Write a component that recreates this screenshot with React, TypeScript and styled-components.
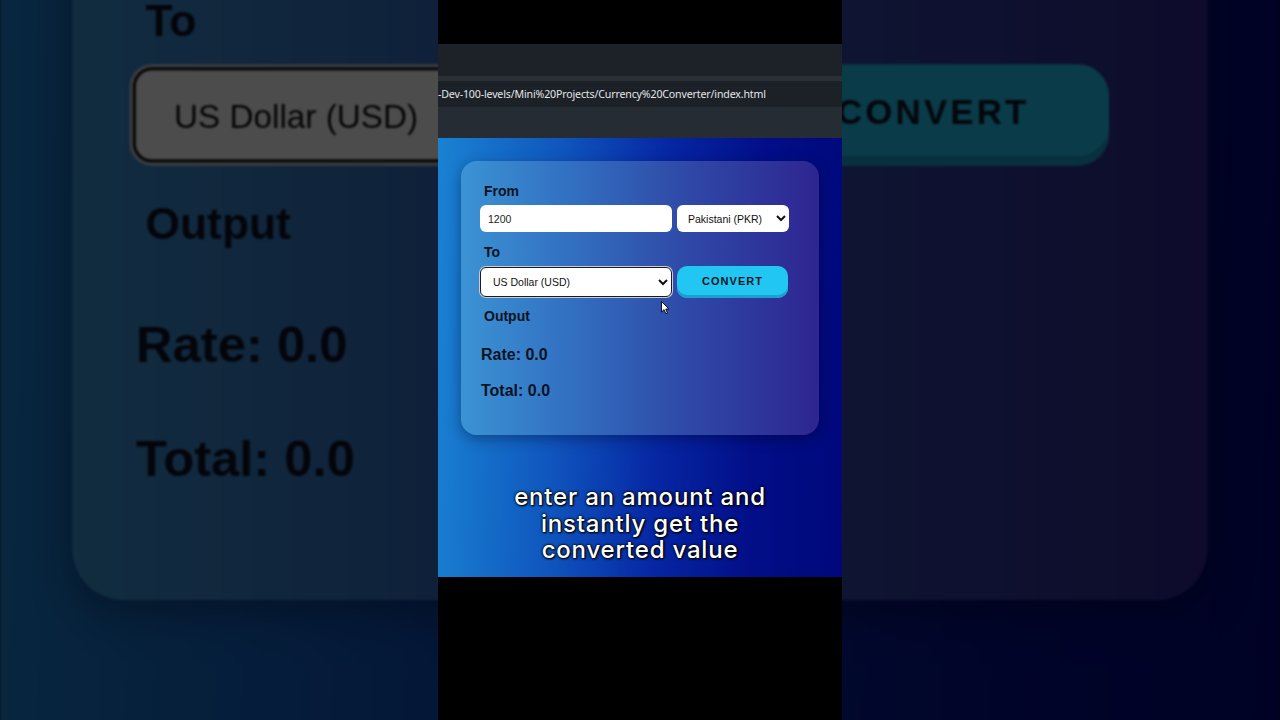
import React from "react";
import styled, { createGlobalStyle } from "styled-components";

const GlobalStyle = createGlobalStyle`
  html, body {
    margin: 0;
    padding: 0;
    background: #000;
    overflow: hidden;
  }
  * { box-sizing: border-box; }
`;

const Stage = styled.div`
  position: relative;
  width: 1280px;
  height: 720px;
  overflow: hidden;
  background: #000;
  display: flex;
  justify-content: center;
`;

// blurred, darkened, zoomed copy of the frame behind the video column
const Backdrop = styled.div`
  position: absolute;
  inset: 0;
  display: flex;
  justify-content: center;
  filter: brightness(0.3) blur(1.2px);
  pointer-events: none;
`;

const Zoomed = styled.div`
  transform: scale(3.17);
  transform-origin: 202px 359px;
`;

const Screen = styled.div`
  position: relative;
  width: 404px;
  height: 720px;
  display: flex;
  flex-direction: column;
  background: #000;
`;

const BlackBand = styled.div<{ $h: number }>`
  height: ${(p) => p.$h}px;
  flex-shrink: 0;
  background: #000;
`;

const ChromeStrip = styled.div<{ $h: number; $bg: string }>`
  height: ${(p) => p.$h}px;
  flex-shrink: 0;
  background: ${(p) => p.$bg};
`;

const UrlBar = styled.div`
  height: 26px;
  flex-shrink: 0;
  background: #1b2127;
  display: flex;
  align-items: center;
  overflow: hidden;
  white-space: nowrap;
  font-family: "Noto Sans", "Open Sans", sans-serif;
  font-size: 10.6px;
  letter-spacing: -0.15px;
  color: #e4e6e8;
`;

const Page = styled.div`
  flex: 1;
  display: flex;
  flex-direction: column;
  padding: 23px 23px 0;
  background: linear-gradient(
    92deg,
    #1a82d2 0%,
    #0f55bd 30%,
    #0626a3 55%,
    #020e88 78%,
    #00087a 100%
  );
`;

const Card = styled.div`
  position: relative;
  width: 358px;
  height: 274px;
  border-radius: 16px;
  padding: 22px 19px 0;
  background: linear-gradient(90deg, #3b93d4 0%, #3270c2 30%, #2f4aa8 62%, #2e2590 100%);
  box-shadow: 0 4px 14px rgba(0, 0, 20, 0.35);
  font-family: "Liberation Sans", Arial, sans-serif;
  color: #0d1220;
`;

const Label = styled.div<{ $mt?: number }>`
  font-size: 14px;
  font-weight: 700;
  line-height: 16px;
  padding-left: 4px;
  margin-top: ${(p) => p.$mt ?? 0}px;
`;

const Row = styled.div<{ $mt: number }>`
  display: flex;
  align-items: center;
  gap: 5px;
  margin-top: ${(p) => p.$mt}px;
`;

const TextInput = styled.input`
  width: 192px;
  height: 27px;
  border: none;
  border-radius: 6px;
  background: #fff;
  padding: 0 8px;
  font-family: "Liberation Sans", Arial, sans-serif;
  font-size: 10.5px;
  color: #222;
  outline: none;
`;

const Select = styled.select<{ $w: number; $focused?: boolean }>`
  width: ${(p) => p.$w}px;
  height: ${(p) => (p.$focused ? 30 : 27)}px;
  border-radius: 6px;
  background: #fff;
  padding: 0 ${(p) => (p.$focused ? 8 : 7)}px;
  font-family: "Liberation Sans", Arial, sans-serif;
  font-size: 10.5px;
  color: #111;
  border: ${(p) => (p.$focused ? "1.5px solid #1c1c1c" : "none")};
  box-shadow: ${(p) => (p.$focused ? "0 0 0 1px #c8ccd4" : "none")};
  outline: none;
`;

const ConvertButton = styled.button`
  width: 111px;
  height: 32px;
  border: none;
  border-radius: 10px;
  background: #22c6f2;
  box-shadow: inset 0 -3px 0 #1a9fd0;
  font-family: "Liberation Sans", Arial, sans-serif;
  font-size: 11px;
  font-weight: 700;
  letter-spacing: 1px;
  color: #0c1624;
  padding-bottom: 3px;
`;

const Result = styled.div<{ $mt: number }>`
  font-size: 16px;
  font-weight: 700;
  line-height: 18px;
  padding-left: 1px;
  margin-top: ${(p) => p.$mt}px;
`;

const Cursor = styled.svg`
  position: absolute;
  left: 200px;
  top: 140px;
`;

const Caption = styled.div`
  margin-top: 49px;
  text-align: center;
  font-family: Inter, "Open Sans", sans-serif;
  font-weight: 500;
  font-size: 24px;
  line-height: 26.5px;
  letter-spacing: 0.8px;
  color: #fff;
  text-shadow: 0 0 3px #000, 0 0 2px #000, 1px 1px 2px #000;
`;

const Frame = ({ withCursor }: { withCursor: boolean }) => (
  <Screen>
    <BlackBand $h={44} />
    <ChromeStrip $h={32} $bg="#1c2228" />
    <ChromeStrip $h={5} $bg="#2a3036" />
    <UrlBar>-Dev-100-levels/Mini%20Projects/Currency%20Converter/index.html</UrlBar>
    <ChromeStrip $h={31} $bg="#262c33" />
    <Page>
      <Card>
        <Label>From</Label>
        <Row $mt={6}>
          <TextInput defaultValue="1200" readOnly />
          <Select $w={112} defaultValue="PKR">
            <option value="PKR">Pakistani (PKR)</option>
          </Select>
        </Row>
        <Label $mt={12}>To</Label>
        <Row $mt={6}>
          <Select $w={192} $focused defaultValue="USD">
            <option value="USD">US Dollar (USD)</option>
          </Select>
          <ConvertButton>CONVERT</ConvertButton>
        </Row>
        <Label $mt={10}>Output</Label>
        <Result $mt={22}>Rate: 0.0</Result>
        <Result $mt={18}>Total: 0.0</Result>
        {withCursor && (
          <Cursor width="9" height="14" viewBox="0 0 9 14">
            <path d="M0.5 0.5 L0.5 11 L3 8.6 L4.8 12.8 L6.4 12.1 L4.7 8 L8 8 Z" fill="#fff" stroke="#000" strokeWidth="0.9" />
          </Cursor>
        )}
      </Card>
      <Caption>
        enter an amount and
        <br />
        instantly get the
        <br />
        converted value
      </Caption>
    </Page>
    <BlackBand $h={143} />
  </Screen>
);

export default function App() {
  return (
    <>
      <GlobalStyle />
      <Stage>
        <Backdrop>
          <Zoomed>
            <Frame withCursor={false} />
          </Zoomed>
        </Backdrop>
        <Frame withCursor />
      </Stage>
    </>
  );
}
